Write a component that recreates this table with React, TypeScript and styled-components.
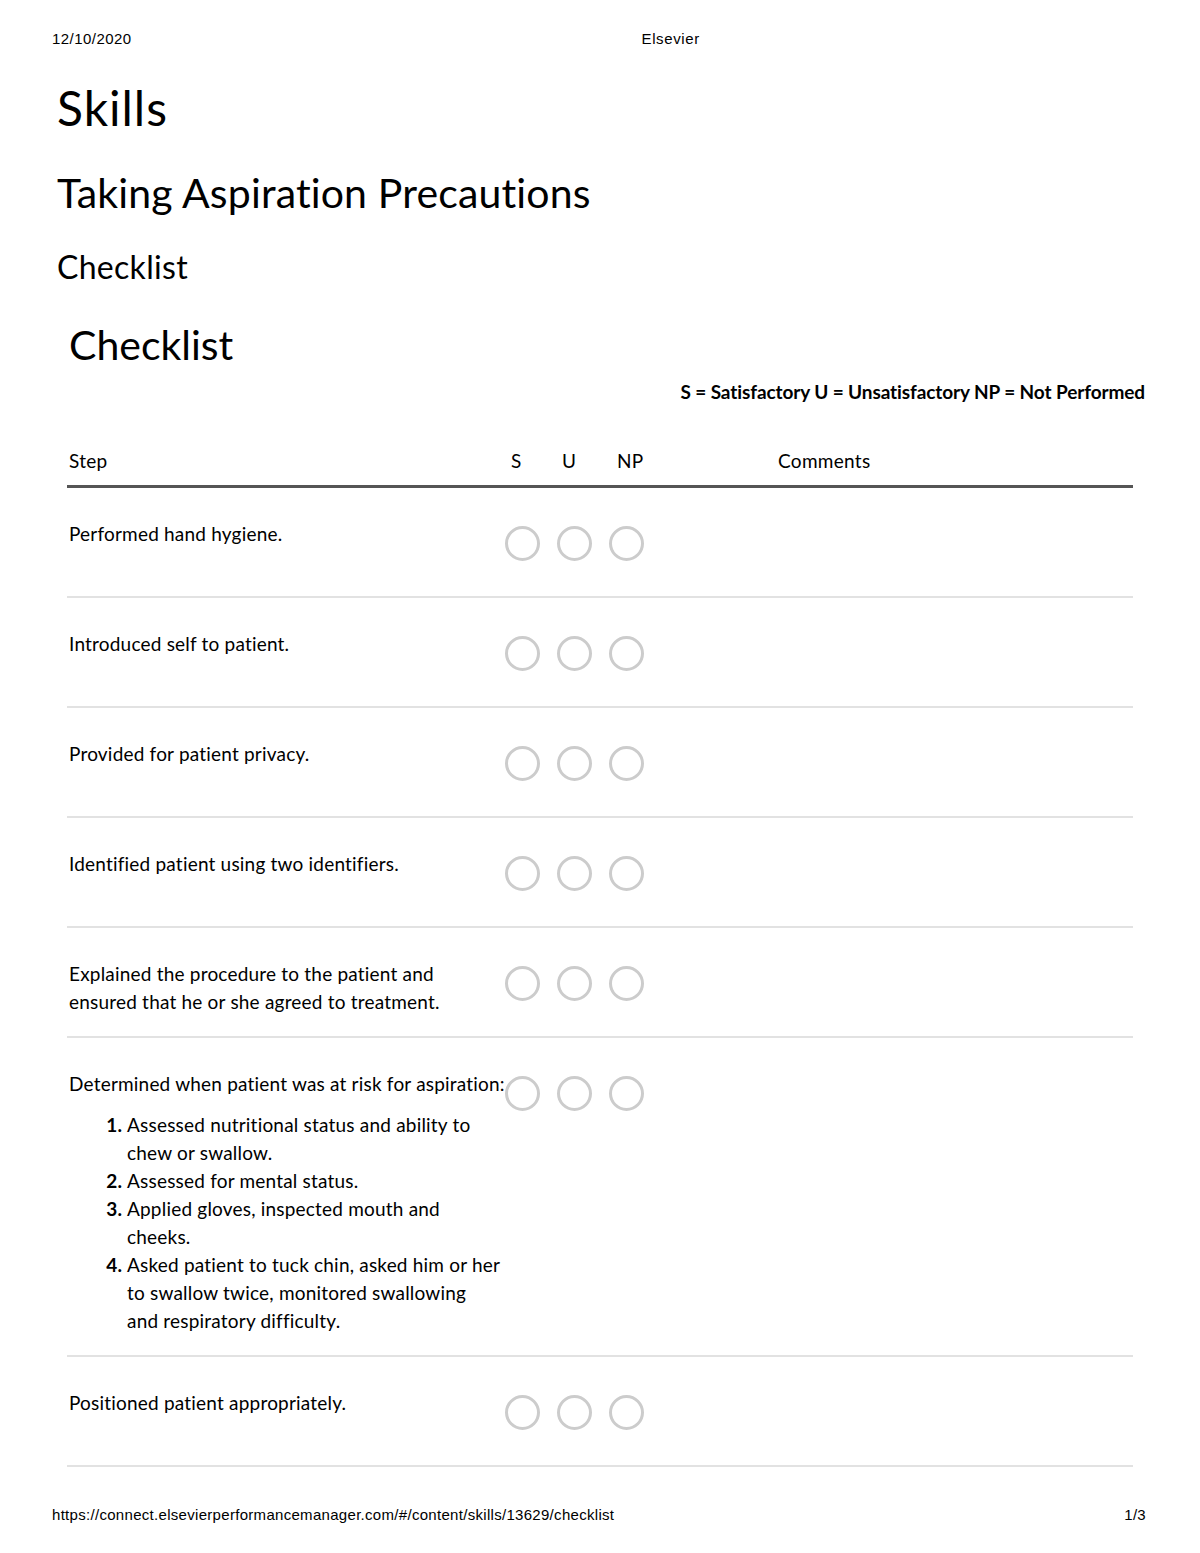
import React from "react";
import styled, { createGlobalStyle } from "styled-components";

const Global = createGlobalStyle`
  html, body { margin: 0; padding: 0; background: #fff; }
  body { font-family: "Lato", "Open Sans", sans-serif; color: #000; }
`;

const Page = styled.div`
  width: 1200px;
  height: 1553px;
  box-sizing: border-box;
  display: flex;
  flex-direction: column;
`;

const PrintBar = styled.div`
  display: flex;
  justify-content: space-between;
  align-items: center;
  font-family: "Liberation Sans", Arial, sans-serif;
  font-size: 15px;
  letter-spacing: 0.3px;
  color: #000;
  padding: 0 54px 0 52px;
  height: 20px;
`;

const TopBar = styled(PrintBar)`
  margin-top: 28px;
  justify-content: flex-start;
  & > span:first-child { letter-spacing: 0.45px; }
  & > span:last-child { margin-left: 510px; letter-spacing: 0.6px; }
`;

const Content = styled.main`
  padding: 0 67px 0 57px;
  flex: 1;
`;

const Title = styled.h1`
  font-weight: 400;
  font-size: 48px;
  line-height: 56px;
  margin: 32px 0 0;
  letter-spacing: 1px;
`;

const Subtitle = styled.h2`
  font-weight: 400;
  font-size: 41px;
  line-height: 48px;
  margin: 33px 0 0;
  letter-spacing: 0.15px;
`;

const Section = styled.h3`
  font-weight: 400;
  font-size: 32px;
  line-height: 40px;
  margin: 30px 0 0;
  letter-spacing: 0.3px;
`;

const Card = styled.section`
  padding-left: 10px;
`;

const CardTitle = styled.h2`
  font-weight: 400;
  font-size: 41px;
  line-height: 48px;
  margin: 34px 0 0 2px;
  letter-spacing: 0px;
`;

const Legend = styled.div`
  text-align: right;
  font-weight: 700;
  font-size: 19px;
  letter-spacing: -0.1px;
  margin: 11px -12px 0 0;
`;

const Table = styled.div`
  margin-top: 44px;
`;

const Row = styled.div<{ $head?: boolean; $tall?: boolean }>`
  display: grid;
  grid-template-columns: 429px 52px 52px 52px 1fr;
  align-items: start;
  box-sizing: border-box;
  border-bottom: ${(p) => (p.$head ? "3px solid #555" : "2px solid #e2e2e2")};
  min-height: ${(p) => (p.$head ? "0" : "110px")};
  padding: ${(p) => (p.$head ? "0 0 10px" : p.$tall ? "32px 0 20px" : "32px 0 0")};
`;

const HeadCell = styled.div<{ $indent?: number }>`
  font-size: 19px;
  line-height: 28px;
  letter-spacing: 0.3px;
  padding-left: ${(p) => p.$indent ?? 2}px;
`;

const StepText = styled.div`
  font-size: 19px;
  line-height: 28px;
  padding-left: 2px;
  letter-spacing: 0.2px;
`;

const Lead = styled.div<{ $nowrap?: boolean }>`
  white-space: ${(p) => (p.$nowrap ? "nowrap" : "normal")};
`;

const SubList = styled.ol`
  margin: 13px -4px 0 0;
  padding-left: 58px;
  & li::marker { font-weight: 700; }
`;

const RadioCell = styled.div`
  display: flex;
  justify-content: center;
`;

const Radio = styled.span`
  display: block;
  width: 29px;
  height: 29px;
  border: 3.5px solid #cccccc;
  border-radius: 50%;
  margin-top: 6px;
`;

const Footer = styled(PrintBar)`
  margin-bottom: 29px;
`;

type Step = { text: string; items?: string[] };

const steps: Step[] = [
  { text: "Performed hand hygiene." },
  { text: "Introduced self to patient." },
  { text: "Provided for patient privacy." },
  { text: "Identified patient using two identifiers." },
  { text: "Explained the procedure to the patient and ensured that he or she agreed to treatment." },
  {
    text: "Determined when patient was at risk for aspiration:",
    items: [
      "Assessed nutritional status and ability to chew or swallow.",
      "Assessed for mental status.",
      "Applied gloves, inspected mouth and cheeks.",
      "Asked patient to tuck chin, asked him or her to swallow twice, monitored swallowing and respiratory difficulty.",
    ],
  },
  { text: "Positioned patient appropriately." },
];

export default function App() {
  return (
    <Page>
      <Global />
      <TopBar>
        <span>12/10/2020</span>
        <span>Elsevier</span>
      </TopBar>
      <Content>
        <Title>Skills</Title>
        <Subtitle>Taking Aspiration Precautions</Subtitle>
        <Section>Checklist</Section>
        <Card>
          <CardTitle>Checklist</CardTitle>
          <Legend>S = Satisfactory U = Unsatisfactory NP = Not Performed</Legend>
          <Table>
            <Row $head>
              <HeadCell>Step</HeadCell>
              <HeadCell $indent={15}>S</HeadCell>
              <HeadCell $indent={14}>U</HeadCell>
              <HeadCell $indent={17}>NP</HeadCell>
              <HeadCell $indent={126}>Comments</HeadCell>
            </Row>
            {steps.map((s) => (
              <Row key={s.text} $tall={!!s.items}>
                <StepText>
                  <Lead $nowrap={!!s.items}>{s.text}</Lead>
                  {s.items && (
                    <SubList>
                      {s.items.map((i) => (
                        <li key={i}>{i}</li>
                      ))}
                    </SubList>
                  )}
                </StepText>
                <RadioCell><Radio /></RadioCell>
                <RadioCell><Radio /></RadioCell>
                <RadioCell><Radio /></RadioCell>
                <div />
              </Row>
            ))}
          </Table>
        </Card>
      </Content>
      <Footer>
        <span>https://connect.elsevierperformancemanager.com/#/content/skills/13629/checklist</span>
        <span>1/3</span>
      </Footer>
    </Page>
  );
}
